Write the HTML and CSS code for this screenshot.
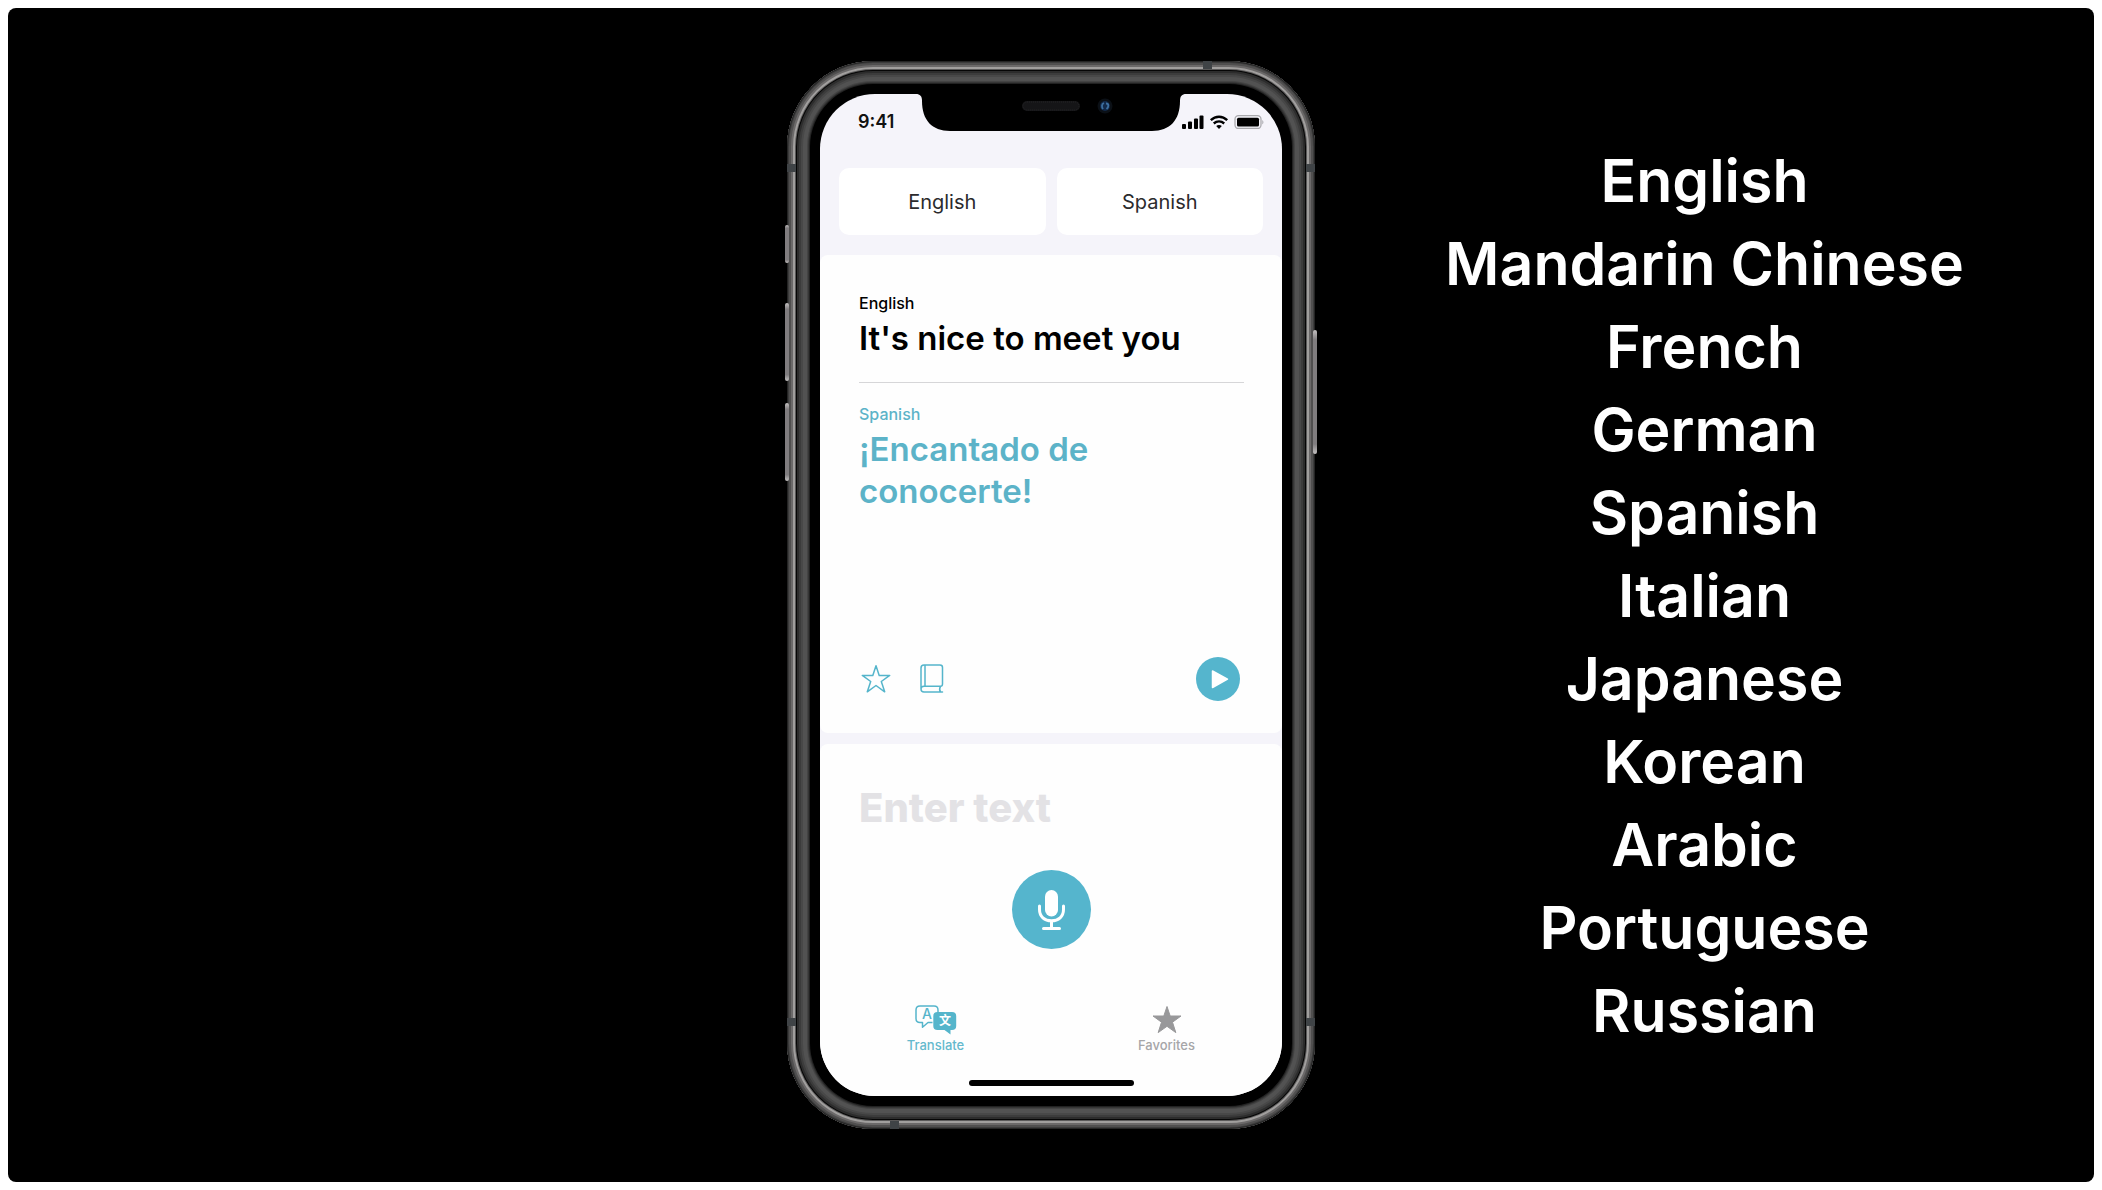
FILE: index.html
```html
<!DOCTYPE html>
<html lang="en">
<head>
<meta charset="utf-8">
<meta name="viewport" content="width=device-width, initial-scale=1">
<title>Translate</title>
<link rel="stylesheet" href="styles.css">
</head>
<body>
<main class="stage">
  <section class="phone" aria-label="Translate app">
    <span class="key key-mute"></span>
    <span class="key key-up"></span>
    <span class="key key-down"></span>
    <span class="key key-power"></span>
    <span class="band band-top"></span>
    <span class="band band-bottom"></span>
    <span class="band band-left-high"></span>
    <span class="band band-left-low"></span>
    <span class="band band-right-high"></span>
    <span class="band band-right-low"></span>
    <div class="screen">
      <svg class="notch" viewBox="0 0 270 38" aria-hidden="true">
        <path d="M0 0C4 0 6 2 6 7C6 26 16 37 34 37H236C254 37 264 26 264 7C264 2 266 0 270 0Z" fill="#000"/>
        <rect x="106" y="7" width="58" height="10" rx="5" fill="#151517"/>
        <rect x="107" y="8" width="56" height="8" rx="4" fill="none" stroke="#252527" stroke-dasharray="1 1"/>
        <circle cx="189" cy="12" r="7.500" fill="#0b1016"/>
        <circle cx="189" cy="12" r="5" fill="#12294a"/>
        <path d="M188 9C185.500 10 185.500 13 187 15M190 9.500C193 9.500 193 13 190.500 15" fill="none" stroke="#3d6f9f" stroke-width="1.800"/>
      </svg>
      <header class="top">
        <div class="status">
          <time class="clock">9:41</time>
          <svg class="status-icons" viewBox="0 0 82 14" aria-hidden="true">
            <rect x="0" y="9" width="4" height="5" rx="1"/>
            <rect x="6" y="6.500" width="4" height="7.500" rx="1"/>
            <rect x="12" y="3.500" width="4" height="10.500" rx="1"/>
            <rect x="17.500" y="0.500" width="4" height="13.500" rx="1"/>
            <path d="M28.800 5.200C33.600 .5 40.400 .5 45.200 5.200M31.800 8.500C34.800 5.700 39.200 5.700 42.200 8.500" fill="none" stroke="#000" stroke-width="2.400"/>
            <path d="M37 14L34.200 11C35.800 9.600 38.200 9.600 39.800 11Z"/>
            <rect x="53" y="0.700" width="26" height="12.800" rx="3.500" fill="none" stroke="#a9a9ad" stroke-width="1.300"/>
            <rect x="55" y="2.700" width="22" height="8.800" rx="1.500"/>
            <path d="M80.300 5V9.500C81.800 8.800 81.800 5.700 80.300 5Z" fill="#a9a9ad"/>
          </svg>
        </div>
        <div class="pair">
          <button class="pick" type="button">English</button>
          <button class="pick" type="button">Spanish</button>
        </div>
      </header>

      <article class="card result">
        <div class="source">
          <p class="label">English</p>
          <h1 class="phrase">It's nice to meet you</h1>
        </div>
        <div class="target" lang="es">
          <p class="label" lang="en">Spanish</p>
          <p class="phrase">¡Encantado de conocerte!</p>
        </div>
        <div class="actions">
          <button class="icon-button" type="button" aria-label="Favorite">
            <svg width="30" height="30" viewBox="0 0 30 30"><path d="M15 1.800L18.200 11.400H28.700L20.300 17.500L23.700 27.800L15 21.500L6.300 27.800L9.700 17.500L1.300 11.400H11.800Z" fill="none" stroke="#55b5cb" stroke-width="1.500" stroke-linejoin="round"/></svg>
          </button>
          <button class="icon-button" type="button" aria-label="Dictionary">
            <svg width="24" height="30" viewBox="0 0 24 30"><g fill="none" stroke="#55b5cb" stroke-width="1.500" stroke-linecap="round" stroke-linejoin="round"><path d="M22.500 28H4C2 28 1 27 1 25V4C1 2 2 1 4 1H20C21.800 1 22.500 2 22.500 3.500V20C22.500 21.500 21.800 22.300 20.500 22.300H4C2 22.300 1 23.300 1 25M5 1V22.300M20.500 22.300C19.500 24 19.500 26.500 20.500 28"/></g></svg>
          </button>
          <button class="play" type="button" aria-label="Play translation">
            <svg width="44" height="44" viewBox="0 0 44 44"><path d="M16.500 14V30.500L31.500 22.200Z" fill="#fff" stroke="#fff" stroke-width="1.500" stroke-linejoin="round"/></svg>
          </button>
        </div>
      </article>

      <section class="card compose">
        <input class="entry" type="text" placeholder="Enter text" aria-label="Enter text">
        <button class="mic" type="button" aria-label="Speak">
          <svg width="79" height="79" viewBox="0 0 79 79"><rect x="33" y="20" width="13" height="26.500" rx="6.500" fill="#fff"/><path d="M27.500 36V39.500C27.500 46.500 32.500 50.800 39.500 50.800S51.500 46.500 51.500 39.500V36M39.500 51V58M31.500 58.500H47.500" fill="none" stroke="#fff" stroke-width="3" stroke-linecap="round"/></svg>
        </button>
        <nav class="tabs">
          <a class="tab tab-on" href="#translate">
            <svg width="42" height="30" viewBox="0 0 42 30" aria-hidden="true">
              <path d="M17.500 17.500H13L7.500 22.200V17.500H5C2.500 17.500 1 16 1 13.500V5C1 2.500 2.500 1 5 1H19C21.500 1 23 2.500 23 5V7.500" fill="none" stroke="#55b5cb" stroke-width="1.500" stroke-linejoin="round"/>
              <path d="M22.500 7H37C39.800 7 41.200 8.500 41.200 11V21C41.200 23.500 39.800 25 37 25H35.500V29.500L29.500 25H22.500C19.700 25 18.300 23.500 18.300 21V11C18.300 8.500 19.700 7 22.500 7Z" fill="#55b5cb"/>
              <text class="glyph-a" x="12" y="14" text-anchor="middle">A</text>
              <text class="glyph-wen" x="30" y="20" text-anchor="middle">文</text>
            </svg>
            <span>Translate</span>
          </a>
          <a class="tab" href="#favorites">
            <svg width="30" height="30" viewBox="0 0 30 30" aria-hidden="true"><path d="M15 1.500L18.200 11H29L20.500 17.200L23.800 27.600L15 21.300L6.200 27.600L9.500 17.200L1 11H11.800Z" fill="#98989a" stroke="#98989a" stroke-linejoin="round"/></svg>
            <span>Favorites</span>
          </a>
        </nav>
        <div class="home"></div>
      </section>
    </div>
  </section>

  <ul class="languages">
    <li>English</li>
    <li>Mandarin Chinese</li>
    <li>French</li>
    <li>German</li>
    <li>Spanish</li>
    <li>Italian</li>
    <li>Japanese</li>
    <li>Korean</li>
    <li>Arabic</li>
    <li>Portuguese</li>
    <li>Russian</li>
  </ul>
</main>
</body>
</html>
```
FILE: styles.css
```css
* { box-sizing: border-box; }

body {
  margin: 8px;
  background: #fff;
  font-family: Inter, "Liberation Sans", "Noto Sans CJK SC", sans-serif;
}

p, h1, ul { margin: 0; padding: 0; }

button, input {
  border: 0;
  padding: 0;
  background: none;
  color: inherit;
  font: inherit;
}

svg { display: block; }

.stage {
  display: grid;
  grid-template-columns: 1fr auto 1fr;
  align-items: center;
  min-height: calc(100vh - 16px);
  border-radius: 8px;
  background: #000;
}

/* Device body: concentric rings from the steel rim inwards */
.phone {
  position: relative;
  grid-column: 2;
  width: 528px;
  padding: 33px;
  border-radius: 86px;
  background: #000;
  box-shadow:
    inset 0 0 0 1px #242424,
    inset 0 0 0 2px #3c3c3c,
    inset 0 0 0 4px #504f4f,
    inset 0 0 0 6px #6b6969,
    inset 0 0 0 8px #a09e9d,
    inset 0 0 0 9px #5a5959,
    inset 0 0 0 10px #050505,
    inset 0 0 0 12px #2c2c2c,
    inset 0 0 0 14px #3c3c3c,
    inset 0 0 0 16px #484848,
    inset 0 0 0 20px #525252,
    inset 0 0 0 21px #444,
    inset 0 0 0 22px #363636,
    inset 0 0 0 23px #222;
}

.key {
  position: absolute;
  width: 4px;
  border-radius: 2px;
  background: linear-gradient(#c4c1c1, #807d7f 8%, #807d7f 92%, #c4c1c1);
}
.key-mute { left: -2px; top: 164px; height: 38px; }
.key-up { left: -2px; top: 242px; height: 78px; }
.key-down { left: -2px; top: 342px; height: 78px; }
.key-power { right: -2px; top: 269px; height: 124px; }

.band { position: absolute; width: 9px; height: 8px; background: #3f4346; }
.band-top { top: 0; right: 103px; }
.band-bottom { bottom: 0; left: 103px; }
.band-left-high { left: 0; top: 103px; }
.band-left-low { left: 0; bottom: 103px; }
.band-right-high { right: 0; top: 103px; }
.band-right-low { right: 0; bottom: 103px; }

.screen {
  position: relative;
  display: flex;
  flex-direction: column;
  min-height: 1002px;
  border-radius: 55px;
  background: #f5f4fa;
  overflow: hidden;
}

.notch {
  position: absolute;
  top: 0;
  left: calc(50% - 135px);
  width: 270px;
  height: 38px;
}

.status {
  display: flex;
  align-items: center;
  justify-content: space-between;
  height: 56px;
  padding: 0 18px 0 38px;
}
.clock { font-size: 18px; line-height: 24px; font-weight: 600; color: #111; }
.status-icons { width: 82px; height: 14px; }

.pair { display: flex; gap: 11px; padding: 18px 19px 20px; }
.pick {
  flex: 1;
  height: 67px;
  border-radius: 10px;
  background: #fff;
  color: #2b2b2d;
  font-size: 20px;
  line-height: 24px;
}

.card { display: flex; flex-direction: column; background: #fefefe; }

.result { flex: 1; padding: 38px 38px 32px 39px; border-radius: 8px; }
.source { padding-bottom: 23px; border-bottom: 1px solid #d6d6d8; }
.target { padding-top: 21px; color: #5cb3c8; }
.label { margin-bottom: 4px; font-size: 16px; line-height: 20px; font-weight: 500; }
.phrase { font-size: 33px; line-height: 42px; font-weight: 600; }
.target .phrase { max-width: 300px; }

.actions { display: flex; align-items: center; gap: 29px; margin-top: auto; padding: 0 4px 0 2px; }
.play, .mic { border-radius: 50%; background: #55b5cd; }
.play { margin-left: auto; }

.compose { margin-top: 11px; padding-top: 40px; border-radius: 8px 8px 0 0; }
.entry {
  margin: 0 39px;
  height: 48px;
  font-size: 40px;
  line-height: 48px;
  font-weight: 800;
  outline: 0;
}
.entry::placeholder { color: #e3e2e5; opacity: 1; }
.mic { align-self: center; margin-top: 38px; }

.tabs { display: flex; margin-top: 56px; }
.tab {
  display: flex;
  flex: 1;
  flex-direction: column;
  align-items: center;
  gap: 2px;
  color: #a6a6a8;
  font-size: 13px;
  line-height: 16px;
  font-weight: 500;
  text-decoration: none;
}
.tab-on { color: #64b9cd; }
.glyph-a { font-size: 14px; fill: #55b5cb; }
.glyph-wen { font-family: "Noto Sans CJK SC", sans-serif; font-size: 12px; font-weight: 700; fill: #fff; }

.home {
  align-self: center;
  width: 165px;
  height: 6px;
  margin: 27px 0 10px;
  border-radius: 3px;
  background: #000;
}

.languages {
  list-style: none;
  text-align: center;
  color: #fff;
  font-size: 59px;
  line-height: 83px;
  font-weight: 600;
}
```
